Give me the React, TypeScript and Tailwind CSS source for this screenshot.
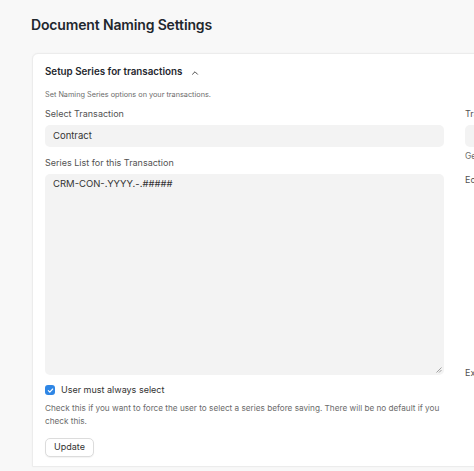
import React from "react";

const Field = ({ label, children }: { label: string; children: React.ReactNode }) => (
  <div className="flex flex-col gap-[5px]">
    <label className="whitespace-nowrap text-[9px] leading-[12px] text-[#525252]">{label}</label>
    {children}
  </div>
);

export default function App() {
  return (
    <div
      className="min-h-[471px] w-[474px] overflow-hidden bg-[#f8f8f8] text-[#1f272e]"
      style={{ fontFamily: "Inter, 'Noto Sans', sans-serif" }}
    >
      <div className="h-[53px] pl-[31px] pt-[15px]">
        <h1 className="text-[14px] font-semibold leading-[20px] tracking-[-0.15px]">Document Naming Settings</h1>
      </div>

      <div className="ml-[32px] h-[414px] w-[460px] rounded-tl-[6px] border border-[#ececec] bg-white pl-[12px] pt-[11px] shadow-[0_0_2px_rgba(0,0,0,0.04)]">
        <div className="flex items-center gap-[8px]">
          <h2 className="text-[9.8px] font-semibold leading-[14px]">Setup Series for transactions</h2>
          <svg width="10" height="10" viewBox="0 0 16 16" fill="none" className="mt-[1px]">
            <path d="M4 10l4-4 4 4" stroke="#333" strokeWidth="1.4" strokeLinecap="round" strokeLinejoin="round" />
          </svg>
        </div>

        <p className="mt-[11px] text-[7.3px] leading-[10px] text-[#6b6b6b]">
          Set Naming Series options on your transactions.
        </p>

        <div className="mt-[8px] grid grid-cols-[399px_1fr] gap-x-[21px]">
          <div className="flex flex-col">
            <Field label="Select Transaction">
              <div className="flex h-[22px] items-center rounded-[5px] bg-[#f3f3f3] px-[8px] text-[9.5px] text-[#333]">
                Contract
              </div>
            </Field>

            <div className="mt-[10px]">
              <Field label="Series List for this Transaction">
                <div className="relative h-[201px] rounded-[5px] bg-[#f3f3f3] px-[8px] pt-[4px] text-[9.5px] leading-[12px] text-[#333]">
                  CRM-CON-.YYYY.-.#####
                  <svg width="7" height="7" viewBox="0 0 7 7" className="absolute bottom-[2px] right-[2px]">
                    <path d="M6.5 1.5L1.5 6.5M6.5 4L4 6.5" stroke="#8a8a8a" strokeWidth="0.8" />
                  </svg>
                </div>
              </Field>
            </div>

            <label className="mt-[9px] flex items-center gap-[6px]">
              <span className="flex h-[10px] w-[10px] items-center justify-center rounded-[3px] bg-[#2f86e5]">
                <svg width="7" height="7" viewBox="0 0 8 8" fill="none">
                  <path d="M1.5 4.2l1.7 1.6L6.5 2.3" stroke="white" strokeWidth="1.3" strokeLinecap="round" strokeLinejoin="round" />
                </svg>
              </span>
              <span className="text-[9px] leading-[12px] text-[#333]">User must always select</span>
            </label>

            <p className="mt-[6px] text-[8.2px] leading-[13px] text-[#6b6b6b]">
              Check this if you want to force the user to select a series before saving. There will be no default if you
              check this.
            </p>

            <div className="mt-[4px]">
              <button className="h-[19px] rounded-[5px] border border-[#dcdcdc] bg-white px-[8px] text-[9px] leading-[12px] text-[#333] shadow-[0_1px_1px_rgba(0,0,0,0.05)]">
                Update
              </button>
            </div>
          </div>

          <div className="flex flex-col whitespace-nowrap">
            <Field label="Transaction">
              <div className="h-[22px] rounded-[5px] bg-[#f3f3f3]" />
            </Field>
            <p className="mt-[3px] text-[8.5px] leading-[12px] text-[#6b6b6b]">Get Prefixes</p>
            <p className="mt-[12px] text-[9px] leading-[12px] text-[#525252]">Edit prefixes</p>
            <p className="mt-[181px] text-[9px] leading-[12px] text-[#525252]">Example</p>
          </div>
        </div>
      </div>
    </div>
  );
}
